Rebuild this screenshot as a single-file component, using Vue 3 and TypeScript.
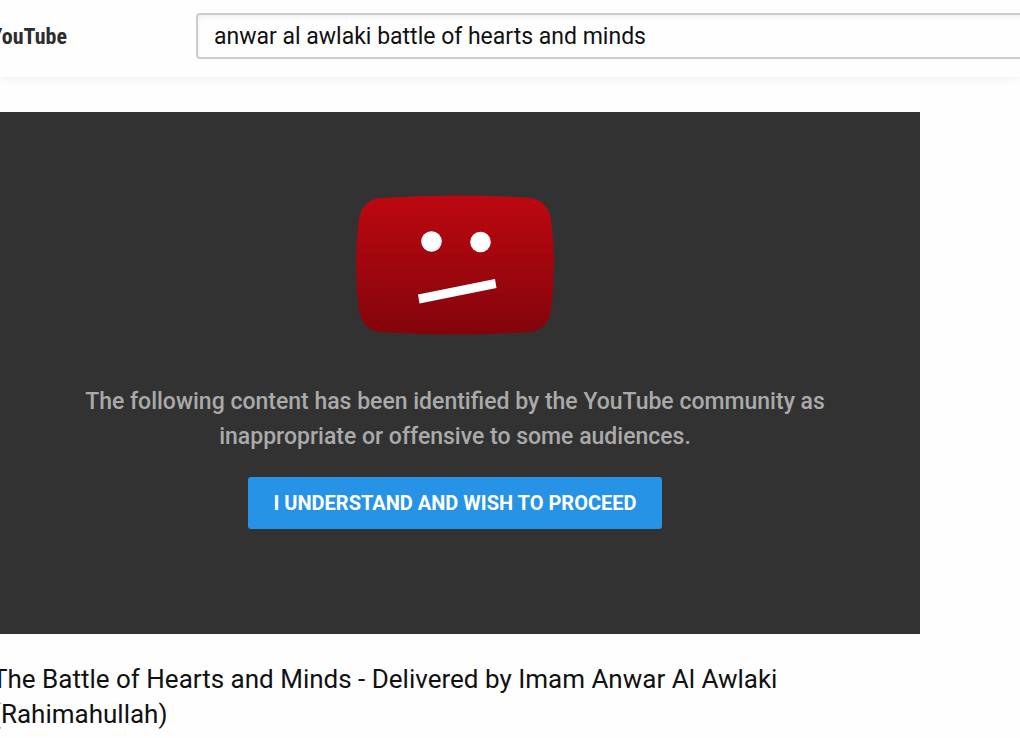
<script setup lang="ts">
import { ref } from 'vue'

const query = ref<string>('anwar al awlaki battle of hearts and minds')
const confirmed = ref<boolean>(false)
</script>

<template>
  <div class="page">
    <header class="masthead">
      <a class="logo" href="#" aria-label="YouTube home"><span>YouTube</span></a>
      <form class="search" role="search" @submit.prevent>
        <input v-model="query" type="text" aria-label="Search" spellcheck="false" />
      </form>
    </header>
    <main>
      <section class="player">
        <svg class="face" viewBox="0 0 198 140" aria-hidden="true">
          <defs>
            <linearGradient id="face-red" x1="0" y1="0" x2="0" y2="1">
              <stop offset="0" stop-color="#bd0810" />
              <stop offset="1" stop-color="#83040b" />
            </linearGradient>
          </defs>
          <path
            fill="url(#face-red)"
            d="M24 3 Q99 -2 174 3 C186 4 193 13 195 24 Q201 70 195 116 C193 127 186 136 174 137 Q99 142 24 137 C12 136 5 127 3 116 Q-3 70 3 24 C5 13 12 4 24 3Z"
          />
          <circle cx="75.500" cy="46.500" r="10.300" fill="#fff" />
          <circle cx="124.500" cy="47" r="10.300" fill="#fff" />
          <path fill="#fff" d="M62 99.500 L139 84 L140.500 93 L63.500 108.500Z" />
        </svg>
        <p class="notice">
          The following content has been identified by the YouTube community as inappropriate or
          offensive to some audiences.
        </p>
        <button class="proceed" type="button" @click="confirmed = true">
          I UNDERSTAND AND WISH TO PROCEED
        </button>
      </section>
      <h1 class="title">
        The Battle of Hearts and Minds - Delivered by Imam Anwar Al Awlaki (Rahimahullah)
      </h1>
    </main>
  </div>
</template>

<style>
body {
  margin: 0;
  background: #fefefe;
}
</style>

<style scoped>
.page {
  overflow: hidden;
  font-family: Roboto, "Liberation Sans", sans-serif;
  color: #111;
}
.masthead {
  display: flex;
  align-items: flex-start;
  height: 77px;
  padding-top: 13px;
  box-sizing: border-box;
  background: #fefefe;
  box-shadow: 0 2px 8px rgba(0, 0, 0, 0.06);
}
.logo {
  display: flex;
  flex: none;
  justify-content: flex-end;
  width: 67px;
  margin-right: 129px;
  color: #2d2d2d;
  font-family: "Liberation Sans Narrow", "Roboto Condensed", Roboto, sans-serif;
  font-size: 22px;
  font-weight: 700;
  line-height: 48px;
  text-decoration: none;
}
.search {
  flex: 1;
  margin-right: -8px;
}
.search input {
  display: block;
  width: 100%;
  height: 46px;
  box-sizing: border-box;
  padding: 0 16px;
  border: 2px solid #ccc;
  border-radius: 4px;
  background: #fefefe;
  box-shadow: inset 0 2px 4px #eee;
  color: #111;
  font: 400 23px/32px Roboto, "Liberation Sans", sans-serif;
  outline: none;
}
.player {
  display: flex;
  flex-direction: column;
  align-items: center;
  margin: 35px 100px 0 0;
  padding: 83px 10px 105px 0;
  background: #323232;
}
.face {
  width: 198px;
  height: 140px;
}
.notice {
  max-width: 760px;
  margin: 49px 0 23px;
  color: #aaa;
  font-size: 23px;
  font-weight: 500;
  line-height: 35px;
  text-align: center;
}
.proceed {
  height: 52px;
  padding: 0 25px;
  border: 0;
  border-radius: 3px;
  background: #2793e6;
  color: #fff;
  font: 700 20px/32px Roboto, "Liberation Sans", sans-serif;
  cursor: pointer;
}
.title {
  max-width: 900px;
  margin: 28px 0 0 -8px;
  font-size: 26px;
  font-weight: 400;
  line-height: 35px;
}
</style>
